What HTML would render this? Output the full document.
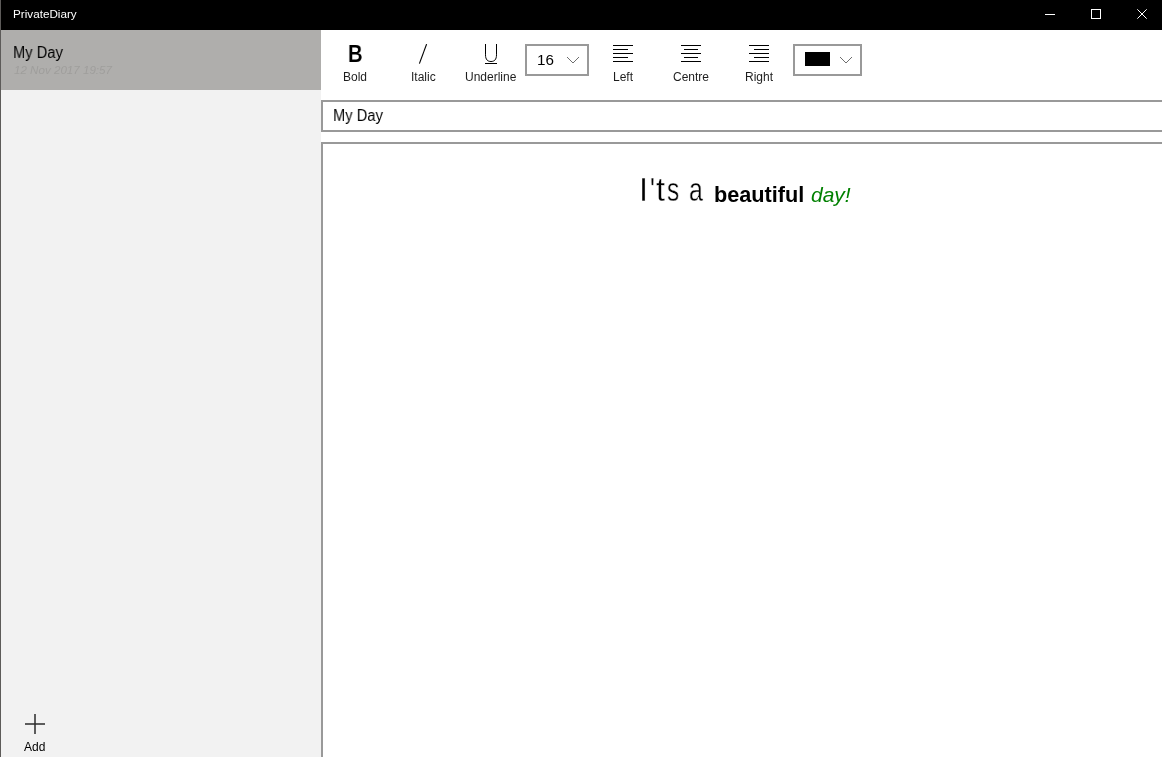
<!DOCTYPE html>
<html>
<head>
<meta charset="utf-8">
<style>
html,body{margin:0;padding:0;}
body{width:1162px;height:757px;position:relative;overflow:hidden;background:#fff;font-family:"Liberation Sans",sans-serif;color:#000;}
.a{position:absolute;white-space:pre;line-height:1;will-change:transform;}
svg{position:absolute;overflow:visible;}
</style>
</head>
<body>
<!-- window left border -->
<div style="position:absolute;left:0;top:0;width:1px;height:757px;background:#5d5b59;"></div>
<!-- title bar -->
<div style="position:absolute;left:1px;top:0;width:1161px;height:30px;background:#000;"></div>
<div class="a" style="left:12.7px;top:8.2px;font-size:11.7px;color:#fff;">PrivateDiary</div>
<svg width="1162" height="30" style="left:0;top:0;" shape-rendering="crispEdges">
  <rect x="1045" y="14" width="10" height="1" fill="#fff"/>
  <rect x="1091.5" y="9.5" width="9" height="9" fill="none" stroke="#fff" stroke-width="1"/>
</svg>
<svg width="1162" height="30" style="left:0;top:0;">
  <path d="M1137.3 9.3 L1146.7 18.7 M1146.7 9.3 L1137.3 18.7" stroke="#fff" stroke-width="1" fill="none"/>
</svg>

<!-- sidebar -->
<div style="position:absolute;left:1px;top:30px;width:320px;height:727px;background:#f2f2f2;"></div>
<div style="position:absolute;left:1px;top:30px;width:320px;height:60px;background:#afaeac;"></div>
<div class="a" style="left:13px;top:44.5px;font-size:16px;color:#000;transform:scaleX(0.92);transform-origin:0 0;">My Day</div>
<div class="a" style="left:14px;top:64px;font-size:11.6px;font-style:italic;color:#9f9e9c;">12 Nov 2017 19:57</div>

<!-- add button -->
<svg width="40" height="40" style="left:15px;top:704px;">
  <path d="M10 20 H30 M20 10 V30" stroke="#2b2b2b" stroke-width="1.5" fill="none"/>
</svg>
<div class="a" style="left:24px;top:741px;font-size:12px;color:#000;">Add</div>

<!-- toolbar -->
<div class="a" style="left:347.6px;top:41.8px;font-size:24.6px;font-weight:bold;transform:scaleX(0.82);transform-origin:0 0;">B</div>
<div class="a" style="left:343px;top:71px;font-size:12px;color:#1e1e1e;">Bold</div>

<svg width="40" height="40" style="left:400px;top:35px;">
  <path d="M19.4 28.6 L26.6 9.1" stroke="#000" stroke-width="1.15" fill="none"/>
</svg>
<div class="a" style="left:411px;top:71px;font-size:12px;color:#1e1e1e;">Italic</div>

<svg width="40" height="40" style="left:470px;top:35px;">
  <path d="M15.5 9 V19.8 C15.5 24.6 17.6 26.5 21 26.5 C24.4 26.5 26.5 24.6 26.5 19.8 V9" stroke="#000" stroke-width="1" fill="none"/>
  <rect x="15" y="28" width="12" height="1" fill="#000"/>
</svg>
<div class="a" style="left:465px;top:71px;font-size:12px;color:#1e1e1e;">Underline</div>

<!-- font size combo -->
<div style="position:absolute;left:525px;top:44px;width:60px;height:28px;border:2px solid #999;background:#fff;"></div>
<div class="a" style="left:537px;top:51.5px;font-size:15.2px;">16</div>
<svg width="20" height="20" style="left:563px;top:50px;">
  <path d="M4 7 L10 13 L16 7" stroke="#6e6e6e" stroke-width="1" fill="none"/>
</svg>

<!-- alignment icons -->
<svg width="200" height="30" style="left:600px;top:40px;" shape-rendering="crispEdges">
  <g fill="#000">
    <rect x="13" y="5" width="20" height="1"/>
    <rect x="13" y="9" width="15" height="1"/>
    <rect x="13" y="13" width="20" height="1"/>
    <rect x="13" y="17" width="15" height="1"/>
    <rect x="13" y="21" width="20" height="1"/>

    <rect x="81" y="5" width="20" height="1"/>
    <rect x="84" y="9" width="14" height="1"/>
    <rect x="81" y="13" width="20" height="1"/>
    <rect x="84" y="17" width="14" height="1"/>
    <rect x="81" y="21" width="20" height="1"/>

    <rect x="149" y="5" width="20" height="1"/>
    <rect x="154" y="9" width="15" height="1"/>
    <rect x="149" y="13" width="20" height="1"/>
    <rect x="154" y="17" width="15" height="1"/>
    <rect x="149" y="21" width="20" height="1"/>
  </g>
</svg>
<div class="a" style="left:613px;top:71px;font-size:12px;color:#1e1e1e;">Left</div>
<div class="a" style="left:673px;top:71px;font-size:12px;color:#1e1e1e;">Centre</div>
<div class="a" style="left:745px;top:71px;font-size:12px;color:#1e1e1e;">Right</div>

<!-- color combo -->
<div style="position:absolute;left:793px;top:44px;width:65px;height:28px;border:2px solid #999;background:#fff;"></div>
<div style="position:absolute;left:805px;top:52px;width:25px;height:14px;background:#000;"></div>
<svg width="20" height="20" style="left:836px;top:50px;">
  <path d="M4 7 L10 13 L16 7" stroke="#6e6e6e" stroke-width="1" fill="none"/>
</svg>

<!-- title textbox -->
<div style="position:absolute;left:321px;top:100px;width:860px;height:28px;border:2px solid #999;background:#fff;"></div>
<div class="a" style="left:333px;top:108.4px;font-size:16px;transform:scaleX(0.92);transform-origin:0 0;">My Day</div>

<!-- editor -->
<div style="position:absolute;left:321px;top:142px;width:860px;height:700px;border:2px solid #999;background:#fff;"></div>
<div class="a" style="left:639px;top:174.2px;font-size:32.6px;-webkit-text-stroke:0.35px #fff;">I</div>
<div class="a" style="left:649.5px;top:174.2px;font-size:32.6px;-webkit-text-stroke:0.35px #fff;transform:scaleX(0.8);transform-origin:0 0;">'</div>
<div class="a" style="left:656.3px;top:174.2px;font-size:32.6px;-webkit-text-stroke:0.35px #fff;">t</div>
<div class="a" style="left:667.2px;top:174.2px;font-size:32.6px;-webkit-text-stroke:0.35px #fff;transform:scaleX(0.75);transform-origin:0 0;">s</div>
<div class="a" style="left:689.2px;top:174.2px;font-size:32.6px;-webkit-text-stroke:0.35px #fff;transform:scaleX(0.76);transform-origin:0 0;">a</div>
<div class="a" style="left:713.5px;top:183.6px;font-size:21.7px;font-weight:bold;">beautiful</div>
<div class="a" style="left:810.5px;top:184px;font-size:21px;font-style:italic;color:#008000;">day!</div>
</body>
</html>
